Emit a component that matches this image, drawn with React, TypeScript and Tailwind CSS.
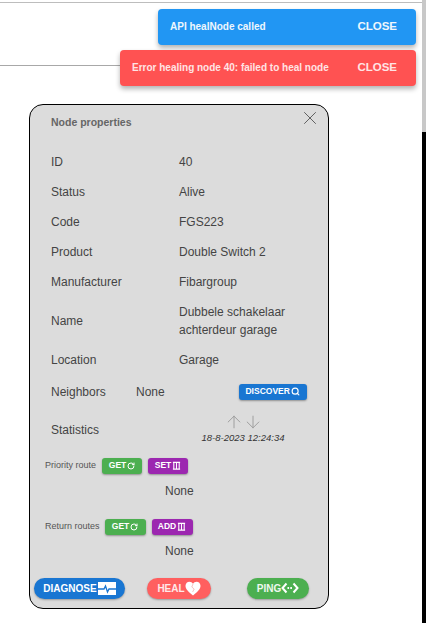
import { Search, RotateCw, X, ArrowUp, ArrowDown } from 'lucide-react';
import type { ReactNode } from 'react';

const rows: { label: string; value: ReactNode; tall?: boolean }[] = [
  { label: 'ID', value: '40' },
  { label: 'Status', value: 'Alive' },
  { label: 'Code', value: 'FGS223' },
  { label: 'Product', value: 'Double Switch 2' },
  { label: 'Manufacturer', value: 'Fibargroup' },
  { label: 'Name', value: 'Dubbele schakelaar achterdeur garage', tall: true },
  { label: 'Location', value: 'Garage' },
];

function Toast({ text, bg, width, textColor }: { text: string; bg: string; width: string; textColor: string }) {
  return (
    <div className={`flex h-[36px] items-center justify-between rounded-[4px] pl-[12px] pr-[19px] shadow-[0_3px_5px_rgba(0,0,0,0.3)] ${bg} ${width}`}>
      <span className={`pb-[2px] text-[10px] font-bold ${textColor}`}>{text}</span>
      <span className={`text-[11.5px] font-bold ${textColor}`}>CLOSE</span>
    </div>
  );
}

function ChipButton({ children, bg, className = '' }: { children: ReactNode; bg: string; className?: string }) {
  return (
    <div className={`flex h-[16px] items-center justify-center gap-[1px] rounded-[3px] text-[8.5px] font-bold text-white shadow-[0_1px_2px_rgba(0,0,0,0.35)] ${bg} ${className}`}>
      {children}
    </div>
  );
}

function ListIcon() {
  return (
    <svg viewBox="0 0 10 10" className="h-[9px] w-[9px]" fill="none" stroke="white" strokeWidth="1.2">
      <path d="M1 1.5h8M2 1.5v7.5M5 1.5v7.5M8 1.5v7.5M1 9h8" />
    </svg>
  );
}

export default function App() {
  return (
    <div className="relative h-[623px] w-[426px] overflow-hidden bg-white font-['Liberation_Sans',Arial,sans-serif] text-[#444]">
      {/* scrollbar edge and the dark area behind it */}
      <div className="absolute right-0 top-0 h-full w-[4px] bg-[#c8c8c8]">
        <div className="mt-[132px] h-full bg-black" />
      </div>

      {/* app bar bottom edge + page divider */}
      <div className="h-[3px] w-[422px] border-b border-[#bdbdbd] bg-white" />
      <div className="mt-[62px] h-px w-[125px] bg-[#a8a8a8]" />

      {/* snackbars */}
      <div className="absolute right-[10px] top-[9px] flex flex-col items-end gap-[5px]">
        <Toast text="API healNode called" bg="bg-[#2196f3]" width="w-[258px]" textColor="text-[#eef6fd]" />
        <Toast text="Error healing node 40: failed to heal node" bg="bg-[#ff5252]" width="w-[296px]" textColor="text-[#ffe4e4]" />
      </div>

      {/* node properties card */}
      <div className="relative ml-[29px] mt-[38px] flex h-[505px] w-[300px] flex-col rounded-[14px] border border-black bg-[#dcdcdc]">
        <X className="absolute right-[7px] top-[2px] h-[22px] w-[22px] text-[#555]" strokeWidth={1} />
        <div className="pl-[21px] pt-[10px] text-[10.5px] font-bold text-[#666]">Node properties</div>

        <div className="mt-[16px] flex flex-col pl-[21px] text-[12px]">
          {rows.map((r) => (
            <div key={r.label} className={`flex items-center ${r.tall ? 'h-[48px] pt-[1px]' : 'h-[30px]'}`}>
              <span className="w-[128px] shrink-0">{r.label}</span>
              <span className="w-[125px] leading-[18px]">{r.value}</span>
            </div>
          ))}

          <div className="mt-[2px] flex h-[30px] items-center">
            <span className="w-[85px] shrink-0">Neighbors</span>
            <span>None</span>
            <ChipButton bg="bg-[#1976d2]" className="ml-[74px] w-[68px]">
              DISCOVER
              <Search className="h-[9px] w-[9px]" strokeWidth={3} />
            </ChipButton>
          </div>

          <div className="mt-[7px] flex h-[32px] items-center">
            <span className="w-[122px] shrink-0">Statistics</span>
            <div className="flex w-[140px] flex-col items-center pb-[5px]">
              <div className="flex text-[#999]">
                <ArrowUp className="h-[20px] w-[20px]" strokeWidth={1.1} />
                <ArrowDown className="-ml-[1px] h-[20px] w-[20px]" strokeWidth={1.1} />
              </div>
              <span className="whitespace-nowrap text-[9.5px] italic leading-[11px] text-[#333]">18-8-2023 12:24:34</span>
            </div>
          </div>
        </div>

        <div className="ml-[15px] mt-[12px] flex items-center gap-[6px]">
          <span className="text-[9px] text-[#555]">Priority route</span>
          <ChipButton bg="bg-[#4caf50]" className="w-[40px]">
            GET
            <RotateCw className="h-[8px] w-[8px]" strokeWidth={3} />
          </ChipButton>
          <ChipButton bg="bg-[#9c27b0]" className="w-[40px]">
            SET
            <ListIcon />
          </ChipButton>
        </div>
        <div className="mt-[8px] pl-[135px] text-[12px]">None</div>

        <div className="ml-[15px] mt-[19px] flex items-center gap-[5px]">
          <span className="text-[9px] text-[#555]">Return routes</span>
          <ChipButton bg="bg-[#4caf50]" className="w-[41px]">
            GET
            <RotateCw className="h-[8px] w-[8px]" strokeWidth={3} />
          </ChipButton>
          <ChipButton bg="bg-[#9c27b0]" className="ml-[1px] w-[41px]">
            ADD
            <ListIcon />
          </ChipButton>
        </div>
        <div className="mt-[7px] pl-[135px] text-[12px]">None</div>

        <div className="mt-[18px] flex items-center pl-[4px]">
          <div className="flex h-[21px] w-[91px] items-center justify-center gap-[1px] rounded-full bg-[#1976d2] text-[10px] font-bold text-white shadow-[0_1px_2px_rgba(0,0,0,0.3)]">
            DIAGNOSE
            <svg viewBox="0 0 18 13" className="h-[13px] w-[18px]">
              <rect width="18" height="13" fill="white" />
              <path d="M0 7h6l1.5-3 2 6 1.5-3h7" fill="none" stroke="#1976d2" strokeWidth="1.3" />
            </svg>
          </div>
          <div className="ml-[22px] flex h-[21px] w-[64px] items-center justify-center rounded-full bg-[#ff5f5f] text-[10px] font-bold text-[#ffe9e9] shadow-[0_1px_2px_rgba(0,0,0,0.3)]">
            HEAL
            <svg viewBox="0 0 16 15" className="h-[15px] w-[16px]">
              <path d="M8 14.5C3 10.5.5 8 .5 4.8.5 2.3 2.4.7 4.4.7 5.9.7 7.2 1.5 8 2.8 8.8 1.5 10.1.7 11.6.7c2 0 3.9 1.6 3.9 4.1 0 3.2-2.5 5.7-7.5 9.7z" fill="white" />
              <path d="M8 3 6.8 6l2.4 2-1.6 3" fill="none" stroke="#f3b5b5" strokeWidth="0.8" />
            </svg>
          </div>
          <div className="ml-[36px] flex h-[21px] w-[62px] items-center justify-center rounded-full bg-[#4caf50] text-[10px] font-bold text-[#eef8ee] shadow-[0_1px_2px_rgba(0,0,0,0.3)]">
            PING
            <svg viewBox="0 0 18 12" className="h-[12px] w-[18px]" fill="none" stroke="white" strokeWidth="2">
              <path d="M5.5 1.5 1.5 6l4 4.5M12.5 1.5l4 4.5-4 4.5" />
              <path d="M6.5 6h5" strokeDasharray="1.6 1.2" />
            </svg>
          </div>
        </div>
      </div>
    </div>
  );
}
